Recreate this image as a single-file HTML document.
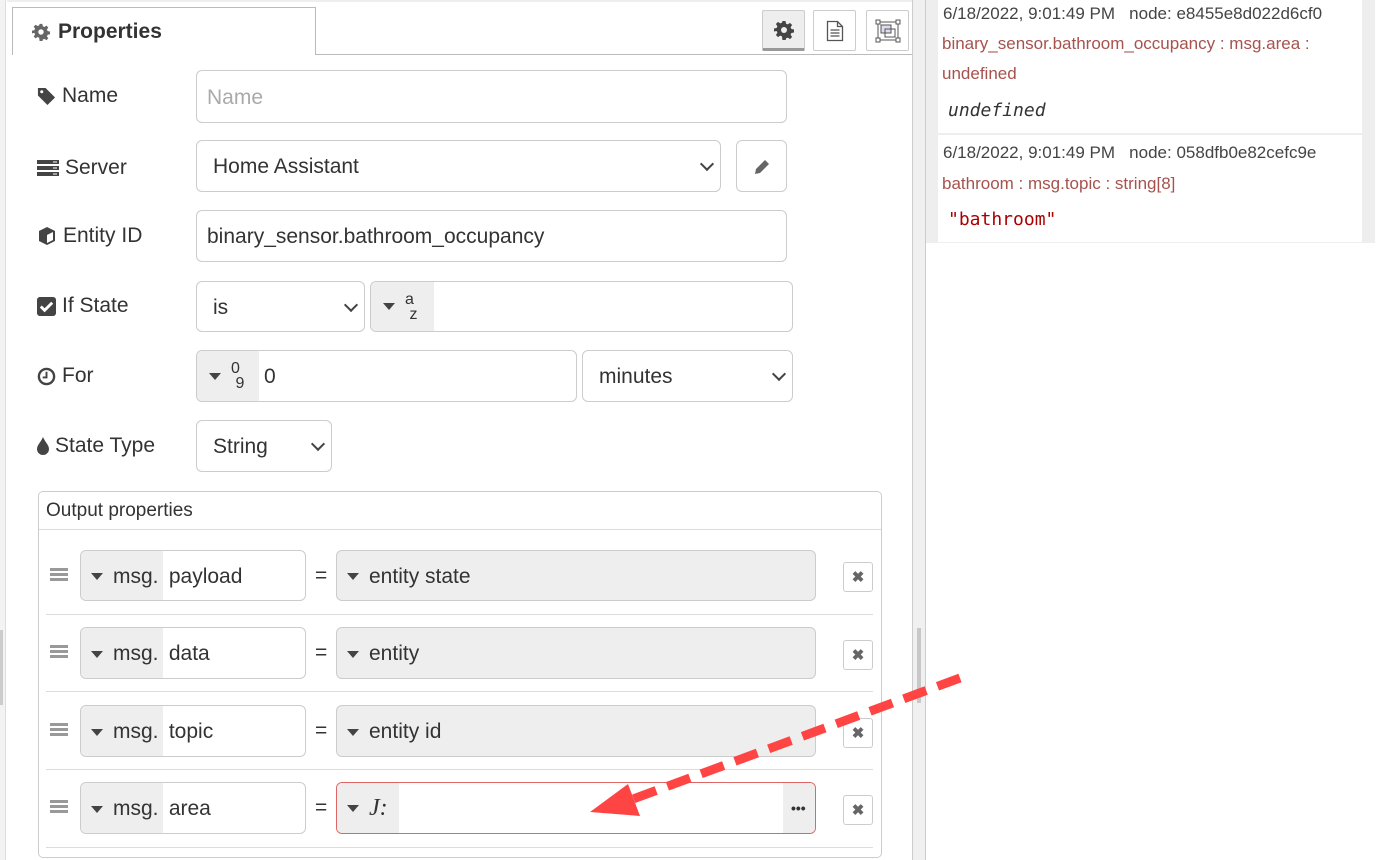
<!DOCTYPE html>
<html><head><meta charset="utf-8"><style>
*{box-sizing:border-box;margin:0;padding:0}
body{width:1380px;height:860px;overflow:hidden;background:#fff;font-family:"Liberation Sans",sans-serif;color:#333;position:relative}
.a{position:absolute}
.inp{position:absolute;border:1px solid #ccc;border-radius:6px;background:#fff;font-size:21px;display:flex;align-items:center;overflow:hidden;padding-top:2px}
.lbl{position:absolute;left:37px;font-size:21px;color:#333;display:flex;align-items:center;gap:6px}
.pre{background:#eee;height:100%;display:flex;align-items:center;padding-left:12px;font-size:21px}
.tri{width:0;height:0;border-left:6px solid transparent;border-right:6px solid transparent;border-top:7px solid #444;margin-right:10px}
.chev{position:absolute;right:8px;top:50%;width:10px;height:10px;border-right:2px solid #444;border-bottom:2px solid #444;transform:translateY(-70%) rotate(45deg)}
.xb{position:absolute;width:30px;height:30px;border:1px solid #ccc;border-radius:3px;background:#fff;color:#666;font-size:15px;font-weight:bold;display:flex;align-items:center;justify-content:center}
.hd{position:absolute;left:50px;width:18px}
.hd i{display:block;height:3px;background:#999;margin-bottom:2px}
.sep{position:absolute;left:46px;width:827px;height:1px;background:#ddd}
.tb{position:absolute;top:10px;width:43px;height:41px;border:1px solid #ccc;border-radius:2px;background:#fff;display:flex;align-items:center;justify-content:center}
.rt{font-size:17px;color:#444}
.rd{font-size:17px;color:#a6524d}
</style></head><body>
<div class="a" style="left:0;top:0;width:6px;height:860px;background:#f3f3f3;border-right:1px solid #ddd"></div>
<div class="a" style="left:0;top:630px;width:3px;height:75px;background:#ccc"></div>
<div class="a" style="left:912px;top:0;width:14px;height:860px;background:#f0f0f0;border-left:1px solid #ccc;border-right:1px solid #ccc"></div>
<div class="a" style="left:917px;top:628px;width:4px;height:75px;background:#c8c8c8"></div>
<div class="a" style="left:7px;top:0;width:905px;height:2px;background:#eee"></div>
<div class="a" style="left:12px;top:54px;width:900px;height:1px;background:#bbb"></div>
<div class="a" style="left:12px;top:7px;width:304px;height:48px;border:1px solid #bbb;border-bottom:none;background:#fff;font-weight:bold;font-size:21px;display:flex;align-items:center;padding-left:19px;gap:8px;color:#333">
<svg width="18" height="18" viewBox="0 0 20 20"><path fill="#666" d="M8.5 1h3l.5 2.6 1.8.8 2.2-1.5 2.1 2.1-1.5 2.2.8 1.8 2.6.5v3l-2.6.5-.8 1.8 1.5 2.2-2.1 2.1-2.2-1.5-1.8.8-.5 2.6h-3L8 16.4l-1.8-.8-2.2 1.5-2.1-2.1 1.5-2.2-.8-1.8L0 11.5v-3L2.6 8l.8-1.8L1.9 4 4 1.9l2.2 1.5L8 2.6z"/><circle cx="10" cy="10" r="3" fill="#fff"/></svg>Properties</div>
<div class="tb" style="left:762px;background:#eee;border-bottom:3px solid #999"><svg width="20" height="20" viewBox="0 0 20 20"><path fill="#444" d="M8.5 1h3l.5 2.6 1.8.8 2.2-1.5 2.1 2.1-1.5 2.2.8 1.8 2.6.5v3l-2.6.5-.8 1.8 1.5 2.2-2.1 2.1-2.2-1.5-1.8.8-.5 2.6h-3L8 16.4l-1.8-.8-2.2 1.5-2.1-2.1 1.5-2.2-.8-1.8L0 11.5v-3L2.6 8l.8-1.8L1.9 4 4 1.9l2.2 1.5L8 2.6z"/><circle cx="10" cy="10" r="3" fill="#eee"/></svg></div>
<div class="tb" style="left:813px"><svg width="18" height="22" viewBox="0 0 18 22"><path d="M1.5 1.5h10l5 5v14h-15z M11.5 1.5v5h5" fill="none" stroke="#555" stroke-width="1.3"/><path d="M4.5 10h9M4.5 13h9M4.5 16h9" stroke="#555" stroke-width="1.3"/></svg></div>
<div class="tb" style="left:866px"><svg width="26" height="24" viewBox="0 0 26 24"><rect x="3" y="3" width="20" height="18" fill="none" stroke="#555"/><rect x="6" y="6" width="10" height="8" fill="#dde" stroke="#555"/><rect x="10" y="10" width="10" height="8" fill="none" stroke="#555"/><g fill="#fff" stroke="#555"><rect x="1" y="1" width="4" height="4"/><rect x="21" y="1" width="4" height="4"/><rect x="1" y="19" width="4" height="4"/><rect x="21" y="19" width="4" height="4"/></g></svg></div>

<div class="lbl" style="top:84px"><svg width="19" height="19" viewBox="0 0 20 20"><path fill="#444" d="M1 1h8l10 10-8 8L1 9z"/><circle cx="5" cy="5" r="1.6" fill="#fff"/></svg>Name</div>
<div class="inp" style="left:196px;top:70px;width:591px;height:53px;padding-left:10px;color:#aaa">Name</div>

<div class="lbl" style="top:156px"><svg width="22" height="18" viewBox="0 0 22 18"><g fill="#444"><rect y="1" width="22" height="4"/><rect y="7" width="22" height="4"/><rect y="13" width="22" height="4"/></g><g fill="#fff"><rect x="16" y="2.5" width="4" height="1"/><rect x="16" y="8.5" width="4" height="1"/><rect x="16" y="14.5" width="4" height="1"/></g></svg>Server</div>
<div class="inp" style="left:196px;top:140px;width:525px;height:52px;padding-left:16px">Home Assistant<span class="chev"></span></div>
<div class="inp" style="left:736px;top:140px;width:51px;height:52px;justify-content:center"><svg width="18" height="18" viewBox="0 0 18 18"><path fill="#666" d="M12 2l4 4-9 9-5 1 1-5z"/></svg></div>

<div class="lbl" style="top:224px"><svg width="20" height="20" viewBox="0 0 20 20"><path fill="#444" d="M10 1l8 4v10l-8 4-8-4V5z"/><path fill="#fff" d="M10 9l6-3v8l-6 3z"/></svg>Entity ID</div>
<div class="inp" style="left:196px;top:210px;width:591px;height:52px;padding-left:10px">binary_sensor.bathroom_occupancy</div>

<div class="lbl" style="top:294px"><svg width="19" height="19" viewBox="0 0 20 20"><rect width="20" height="20" rx="3" fill="#444"/><path d="M4 10l4 4 8-8" fill="none" stroke="#fff" stroke-width="3"/></svg>If State</div>
<div class="inp" style="left:196px;top:281px;width:169px;height:51px;padding-left:16px">is<span class="chev"></span></div>
<div class="inp" style="left:370px;top:281px;width:423px;height:51px;padding-top:0"><div class="pre" style="width:63px"><span class="tri"></span><span style="font-size:16px;line-height:15px;display:inline-block">a<br>&nbsp;z</span></div></div>

<div class="lbl" style="top:364px"><svg width="19" height="19" viewBox="0 0 20 20"><circle cx="10" cy="10" r="8" fill="none" stroke="#444" stroke-width="2.5"/><path d="M10 5v6H6" fill="none" stroke="#444" stroke-width="2"/></svg>For</div>
<div class="inp" style="left:196px;top:350px;width:381px;height:52px;padding-top:0"><div class="pre" style="width:62px;margin-right:5px"><span class="tri"></span><span style="font-size:16px;line-height:15px;display:inline-block">0<br>&nbsp;9</span></div><span style="padding-top:2px">0</span></div>
<div class="inp" style="left:582px;top:350px;width:211px;height:52px;padding-left:16px">minutes<span class="chev"></span></div>

<div class="lbl" style="top:434px"><svg width="12" height="18" viewBox="0 0 12 18"><path fill="#444" d="M6 0C4 5 0 8 0 12a6 6 0 0 0 12 0C12 8 8 5 6 0z"/></svg>State Type</div>
<div class="inp" style="left:196px;top:420px;width:136px;height:52px;padding-left:16px">String<span class="chev"></span></div>

<div class="a" style="left:38px;top:491px;width:844px;height:367px;border:1px solid #ccc;border-radius:5px"></div>
<div class="a" style="left:39px;top:529px;width:842px;height:1px;background:#ddd"></div>
<div class="a" style="left:46px;top:500px;font-size:19px;color:#333">Output properties</div>

<div class="sep" style="top:614px"></div><div class="sep" style="top:691px"></div><div class="sep" style="top:769px"></div><div class="sep" style="top:847px"></div>

<div class="hd" style="top:568px"><i></i><i></i><i></i></div>
<div class="inp" style="left:80px;top:550px;width:226px;height:51px;padding-top:0"><div class="pre" style="width:82px;padding-left:10px;padding-top:2px"><span class="tri"></span>msg.</div><span style="padding-top:2px">&nbsp;payload</span></div>
<div class="a" style="left:315px;top:564px;font-size:21px">=</div>
<div class="inp" style="left:336px;top:550px;width:480px;height:51px;background:#eee;padding-left:10px"><span class="tri"></span>entity state</div>
<div class="xb" style="left:843px;top:562px">✖</div>

<div class="hd" style="top:645px"><i></i><i></i><i></i></div>
<div class="inp" style="left:80px;top:627px;width:226px;height:52px;padding-top:0"><div class="pre" style="width:82px;padding-left:10px;padding-top:2px"><span class="tri"></span>msg.</div><span style="padding-top:2px">&nbsp;data</span></div>
<div class="a" style="left:315px;top:641px;font-size:21px">=</div>
<div class="inp" style="left:336px;top:627px;width:480px;height:52px;background:#eee;padding-left:10px"><span class="tri"></span>entity</div>
<div class="xb" style="left:843px;top:640px">✖</div>

<div class="hd" style="top:723px"><i></i><i></i><i></i></div>
<div class="inp" style="left:80px;top:705px;width:226px;height:52px;padding-top:0"><div class="pre" style="width:82px;padding-left:10px;padding-top:2px"><span class="tri"></span>msg.</div><span style="padding-top:2px">&nbsp;topic</span></div>
<div class="a" style="left:315px;top:719px;font-size:21px">=</div>
<div class="inp" style="left:336px;top:705px;width:480px;height:52px;background:#eee;padding-left:10px"><span class="tri"></span>entity id</div>
<div class="xb" style="left:843px;top:718px">✖</div>

<div class="hd" style="top:800px"><i></i><i></i><i></i></div>
<div class="inp" style="left:80px;top:782px;width:226px;height:52px;padding-top:0"><div class="pre" style="width:82px;padding-left:10px;padding-top:2px"><span class="tri"></span>msg.</div><span style="padding-top:2px">&nbsp;area</span></div>
<div class="a" style="left:315px;top:796px;font-size:21px">=</div>
<div class="inp" style="left:336px;top:782px;width:480px;height:52px;border-color:#d66;padding-top:0"><div class="pre" style="width:62px;padding-left:10px"><span class="tri"></span><span style="font-family:'Liberation Serif',serif;font-size:24px;font-style:italic">J:</span></div><div style="flex:1"></div><div class="pre" style="width:32px;padding-left:8px;font-weight:bold;font-size:14px">•••</div></div>
<div class="xb" style="left:843px;top:795px">✖</div>

<div class="a" style="left:926px;top:0;width:449px;height:243px;background:#eee"></div>
<div class="a" style="left:938px;top:0;width:424px;height:133px;background:#fff"></div>
<div class="a" style="left:938px;top:135px;width:424px;height:107px;background:#fff"></div>
<div class="a rt" style="left:943px;top:4px">6/18/2022, 9:01:49 PM &nbsp;&nbsp;node: e8455e8d022d6cf0</div>
<div class="a rd" style="left:942px;top:34px">binary_sensor.bathroom_occupancy : msg.area :</div>
<div class="a rd" style="left:942px;top:64px">undefined</div>
<div class="a" style="left:948px;top:100px;font-family:'DejaVu Sans Mono',monospace;font-style:italic;font-size:18px;color:#333">undefined</div>
<div class="a rt" style="left:943px;top:143px">6/18/2022, 9:01:49 PM &nbsp;&nbsp;node: 058dfb0e82cefc9e</div>
<div class="a rd" style="left:942px;top:174px">bathroom : msg.topic : string[8]</div>
<div class="a" style="left:948px;top:209px;font-family:'DejaVu Sans Mono',monospace;font-size:18px;color:#a00">"bathroom"</div>

<svg class="a" style="left:0;top:0" width="1380" height="860"><line x1="960" y1="678" x2="625" y2="802" stroke="#f44" stroke-width="9" stroke-dasharray="24,12"/><polygon points="590,812 628,784 640,816" fill="#f44"/></svg>
</body></html>
